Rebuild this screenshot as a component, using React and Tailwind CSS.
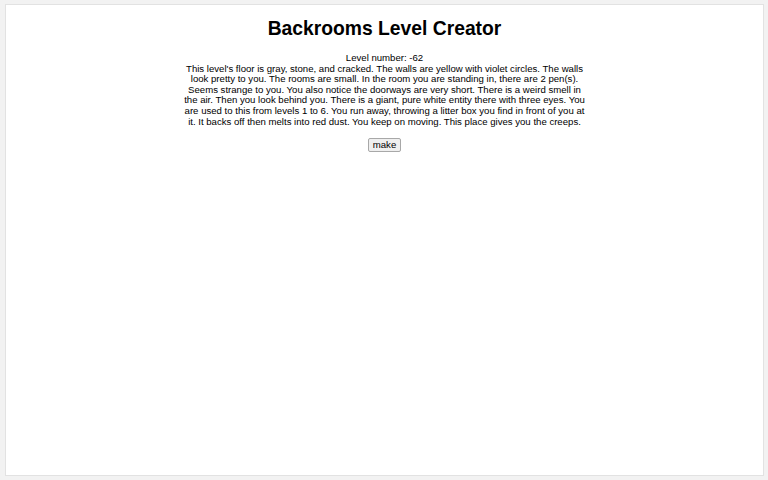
export default function App() {
  const story =
    "This level's floor is gray, stone, and cracked. The walls are yellow with violet circles. The walls look pretty to you. The rooms are small. In the room you are standing in, there are 2 pen(s). Seems strange to you. You also notice the doorways are very short. There is a weird smell in the air. Then you look behind you. There is a giant, pure white entity there with three eyes. You are used to this from levels 1 to 6. You run away, throwing a litter box you find in front of you at it. It backs off then melts into red dust. You keep on moving. This place gives you the creeps.";
  return (
    <div className="h-[480px] w-[768px] bg-[#f2f2f2] pt-[4px] pl-[5px] pr-[4px] pb-[4px] font-['Liberation_Sans',Arial,sans-serif] text-black">
      <div className="flex h-full flex-col items-center border border-[#e2e2e2] bg-white">
        <h1 className="mt-[13px] text-[19.3px] font-bold leading-[22px]">Backrooms Level Creator</h1>
        <div className="mt-[13px] w-[404px] text-center text-[9.6px] leading-[10.6px]">
          <div>Level number: -62</div>
          <div>{story}</div>
        </div>
        <button className="mt-[11px] rounded-[2px] border border-[#a8a8a8] bg-[#efefef] px-[4px] text-[9.6px] leading-[12px]">
          make
        </button>
      </div>
    </div>
  );
}
